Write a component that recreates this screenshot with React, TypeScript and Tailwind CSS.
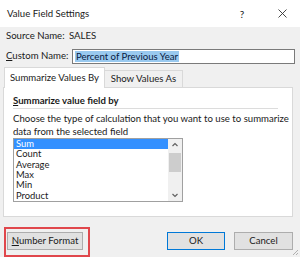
import React from "react";

function U({ children }: { children: React.ReactNode }) {
  return <span className="underline underline-offset-[1px]">{children}</span>;
}

export default function App() {
  const items = ["Sum", "Count", "Average", "Max", "Min", "Product"];
  return (
    <div
      className="relative w-[300px] h-[257px] overflow-hidden bg-[#f0f0f0] text-[#1a1a1a] flex flex-col text-[9.6px] whitespace-nowrap"
      style={{ fontFamily: 'Lato, "Noto Sans", sans-serif' }}
    >
      {/* Title bar */}
      <div className="h-[27px] bg-white flex items-center pl-[7px] shrink-0">
        <span className="text-[9.6px] leading-none">Value Field Settings</span>
        <div className="flex-1" />
        <span className="text-[10px] leading-none w-[10px] text-center mr-[31px]">?</span>
        <svg width="9" height="9" viewBox="0 0 9 9" className="mr-[13px]">
          <path d="M0.5 0.5 L8.5 8.5 M8.5 0.5 L0.5 8.5" stroke="#333" strokeWidth="0.9" />
        </svg>
      </div>

      {/* Source Name */}
      <div className="mt-[2px] h-[14px] flex items-center pl-[6px] shrink-0">
        <span className="w-[63px]">Source Name:</span>
        <span>SALES</span>
      </div>

      {/* Custom Name */}
      <div className="mt-[6px] h-[15px] flex items-center pl-[6px] shrink-0">
        <span className="w-[66px]">
          <U>C</U>ustom Name:
        </span>
        <div className="flex-1 mr-[5px] h-[15px] bg-white border border-[#7a7a7a] flex items-center pl-[2px]">
          <span className="bg-[#99c9ef] leading-[11px] px-[1px] text-[#0a1a40]">Percent of Previous Year</span>
        </div>
      </div>

      {/* Tabs */}
      <div className="mt-[3px] h-[20px] flex items-end pl-[4px] shrink-0 relative z-10">
        <div className="h-[21px] -mb-[1px] w-[101px] bg-white border border-b-0 border-[#d9d9d9] flex items-center justify-center">
          Summarize Values By
        </div>
        <div className="h-[17px] w-[78px] bg-[#f0f0f0] border border-l-0 border-b-0 border-[#d9d9d9] flex items-center justify-center">
          Show Values As
        </div>
      </div>

      {/* Panel */}
      <div className="ml-[3px] w-[290px] h-[130px] bg-white border border-[#d9d9d9] shrink-0 pl-[9px] pr-[14px] pt-[6px]">
        <div className="font-bold leading-[13px]">
          <U>S</U>ummarize value field by
        </div>
        <div className="h-px bg-[#dcdcdc] mt-[1px]" />
        <div className="mt-[3px] leading-[13px]">
          <div>Choose the type of calculation that you want to use to summarize</div>
          <div>data from the selected field</div>
        </div>
        <div className="w-[170px] h-[64px] border border-[#a0a0a0] flex">
          <div className="flex-1 flex flex-col">
            {items.map((it, i) => (
              <div
                key={it}
                className={
                  "h-[10.4px] leading-[10.4px] text-[9.4px] pl-[2px] overflow-hidden " +
                  (i === 0 ? "bg-[#3390ff] text-white" : "")
                }
              >
                {it}
              </div>
            ))}
          </div>
          <div className="w-[14px] bg-[#f0f0f0] flex flex-col items-center">
            <svg width="8" height="10" viewBox="0 0 8 10" className="mt-[1px]">
              <path d="M1.5 6 L4 3.5 L6.5 6" stroke="#606060" strokeWidth="1.2" fill="none" />
            </svg>
            <div className="w-[12px] h-[19px] bg-[#cdcdcd] mt-[3px]" />
            <div className="flex-1" />
            <svg width="8" height="10" viewBox="0 0 8 10" className="mb-[1px]">
              <path d="M1.5 4 L4 6.5 L6.5 4" stroke="#606060" strokeWidth="1.2" fill="none" />
            </svg>
          </div>
        </div>
      </div>

      {/* Buttons */}
      <div className="flex items-start mt-[10px] pl-[4px] shrink-0">
        <div className="w-[86px] h-[30px] border-[2px] border-[#e0474c] pl-[1px] pt-[3px]">
          <div className="w-[76px] h-[18px] bg-[#e1e1e1] border border-[#adadad] flex items-center justify-center">
            <span>
              <U>N</U>umber Format
            </span>
          </div>
        </div>
        <div className="flex-1" />
        <div className="mt-[5px] w-[58px] h-[18px] bg-[#e1e1e1] border border-[#0078d7] flex items-center justify-center">
          OK
        </div>
        <div className="mt-[5px] ml-[9px] mr-[7px] w-[59px] h-[18px] bg-[#e1e1e1] border border-[#adadad] flex items-center justify-center">
          Cancel
        </div>
      </div>

      {/* resize grip */}
      <svg width="8" height="8" viewBox="0 0 8 8" className="absolute right-[1px] bottom-[1px]">
        <path d="M7 2 L2 7 M7 5 L5 7" stroke="#a0a0a0" strokeWidth="0.8" />
      </svg>
    </div>
  );
}
